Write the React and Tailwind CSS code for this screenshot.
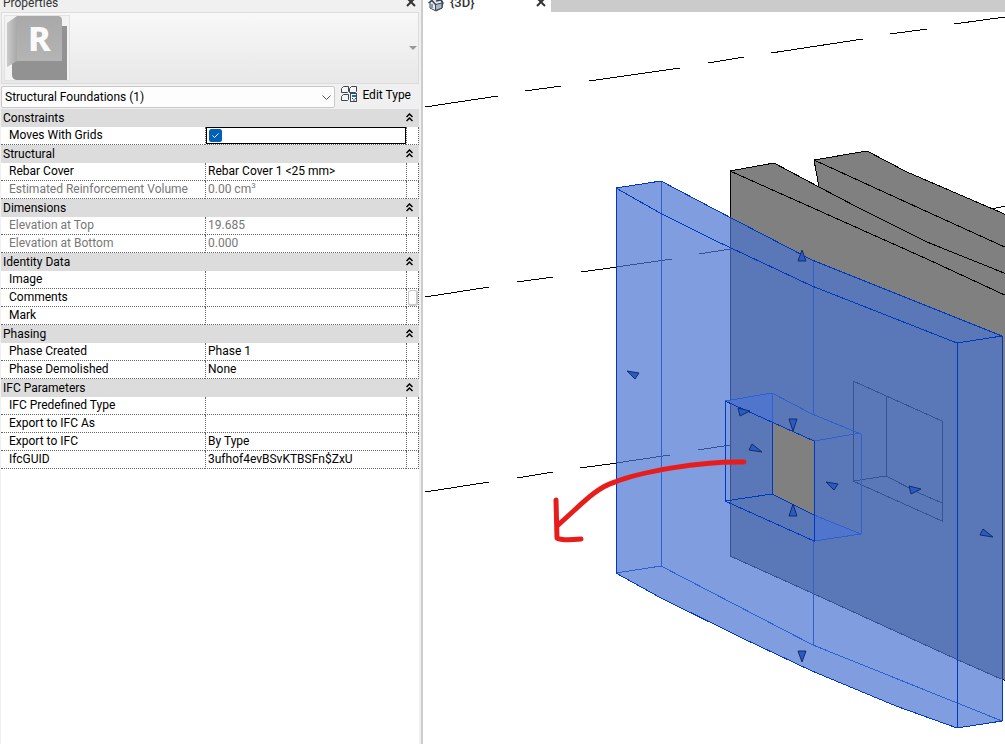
import React from "react";

const sections = [
  { title: "Constraints", rows: [{ name: "Moves With Grids", kind: "check" }] },
  {
    title: "Structural",
    rows: [
      { name: "Rebar Cover", value: "Rebar Cover 1 <25 mm>" },
      { name: "Estimated Reinforcement Volume", value: "0.00 cm", sup: "3", muted: true },
    ],
  },
  {
    title: "Dimensions",
    rows: [
      { name: "Elevation at Top", value: "19.685", muted: true },
      { name: "Elevation at Bottom", value: "0.000", muted: true },
    ],
  },
  {
    title: "Identity Data",
    rows: [
      { name: "Image", value: "" },
      { name: "Comments", value: "", more: true },
      { name: "Mark", value: "" },
    ],
  },
  {
    title: "Phasing",
    rows: [
      { name: "Phase Created", value: "Phase 1" },
      { name: "Phase Demolished", value: "None" },
    ],
  },
  {
    title: "IFC Parameters",
    rows: [
      { name: "IFC Predefined Type", value: "" },
      { name: "Export to IFC As", value: "" },
      { name: "Export to IFC", value: "By Type" },
      { name: "IfcGUID", value: "3ufhof4evBSvKTBSFn$ZxU" },
    ],
  },
];

function CloseIcon() {
  return (
    <svg width="10" height="10" viewBox="0 0 10 10" className="block">
      <path d="M1 1L9 9M9 1L1 9" stroke="#333" strokeWidth="2" fill="none" />
    </svg>
  );
}

function FamilyIcon() {
  return (
    <svg width="66" height="66" viewBox="0 0 66 66" className="block">
      <defs>
        <linearGradient id="fold" x1="0" x2="1">
          <stop offset="0" stopColor="#cacaca" />
          <stop offset="1" stopColor="#a9a9a9" />
        </linearGradient>
        <linearGradient id="face" x1="0" y1="0" x2="0" y2="1">
          <stop offset="0" stopColor="#a9a9a9" />
          <stop offset="1" stopColor="#b4b4b4" />
        </linearGradient>
      </defs>
      <rect x="0.5" y="0.5" width="65" height="65" fill="#f3f3f3" stroke="#e2e2e2" />
      <path d="M8 46L58 11H63V65H12Q8 64 8 60Z" fill="#929292" />
      <path d="M3 8L13 1V46L3 52Z" fill="url(#fold)" />
      <path d="M13 1H55Q58 2 58 5V46H13Z" fill="url(#face)" />
      <text x="24" y="36" fontSize="34" fontWeight="800" fill="#fafafa" fontFamily="'Noto Sans', 'Open Sans', sans-serif">R</text>
    </svg>
  );
}

function EditTypeIcon() {
  return (
    <svg width="17" height="17" viewBox="0 0 17 17" className="block shrink-0">
      <g fill="#f6f6f6" stroke="#3c4655">
        <path d="M2.500 0.500L0.500 2.500V6.500H6.500L7.500 5.500V0.500Z" />
        <path d="M10.500 0.500L8.500 2.500V6.500H14.500L15.500 5.500V0.500Z" />
        <path d="M2.500 8.500L0.500 10.500V14.500H6.500L7.500 13.500V8.500Z" />
        <rect x="9.500" y="7.500" width="6" height="8" />
      </g>
      <rect x="11" y="9" width="4" height="2" fill="#1668c4" />
      <path d="M11 12.500H12M14 12.500H15M12 14H14" stroke="#3c4655" />
    </svg>
  );
}

function HouseIcon() {
  return (
    <svg width="16" height="16" viewBox="0 0 16 16" className="block shrink-0">
      <path d="M2 6L5 2L11 1L15 6L14 12L8 15L2 12Z" fill="#e4e9ee" stroke="#3c4655" />
      <path d="M7.500 8.500L14 7V12L7.500 14.500Z" fill="#a9b7c6" stroke="#3c4655" />
      <path d="M0.500 7L4 4.500L8 9M8 5L13 4L15 8" fill="none" stroke="#3c4655" strokeWidth="1.500" />
      <path d="M4 8V12" stroke="#3c4655" />
    </svg>
  );
}

function Collapse({ title }) {
  return (
    <button type="button" aria-label={"Collapse " + title} className="block h-[17px] self-start px-1">
      <svg width="7" height="9" viewBox="0 0 7 9" className="block">
        <path d="M0.500 4L3.500 1L6.500 4M0.500 8L3.500 5L6.500 8" fill="none" stroke="#000" strokeWidth="1.500" />
      </svg>
    </button>
  );
}

function Row({ row }) {
  const tone = row.muted ? "text-[#777]" : "text-black";
  return (
    <tr className={"h-[18px] " + tone}>
      <th scope="row" className="border-b border-dotted border-[#666] p-0 pl-2 text-left font-normal">
        <span className="block h-[17px]">{row.name}</span>
      </th>
      <td className="border-b border-l border-dotted border-[#666] p-0">
        {row.kind === "check" ? (
          <label className="flex h-[17px] items-center border border-black pl-0.5">
            <input type="checkbox" defaultChecked aria-label={row.name} className="peer sr-only" />
            <svg width="13" height="13" viewBox="0 0 13 13" className="block">
              <rect width="13" height="13" rx="2.500" fill="#005fb8" />
              <path d="M3.500 6.500L5.500 8.500L9.500 4.500" fill="none" stroke="#fff" />
            </svg>
          </label>
        ) : (
          <span className="block h-[17px] pl-0.5">
            {row.value}
            {row.sup && <sup className="top-[-5px] text-[8px]">{row.sup}</sup>}
          </span>
        )}
      </td>
      <td className="border-x border-b border-dotted border-[#666] p-0">
        {row.more && (
          <button type="button" aria-label="Edit comments" className="ml-px block h-4 w-[10px] rounded-[3px] border border-r-2 border-b-2 border-[#c9c9c9] bg-white" />
        )}
      </td>
    </tr>
  );
}

function Properties() {
  return (
    <aside className="flex w-[424px] shrink-0 flex-col border-r border-white bg-[#f0f0f0]">
      <div className="flex grow flex-col border-r-2 border-[#cdcdcd] pr-0.5 pl-px">
        <header className="flex h-3 items-end justify-between overflow-hidden pr-[3px] pl-0.5">
          <h1 className="text-[12px] leading-[18px] text-[#333]">Properties</h1>
          <button type="button" aria-label="Close properties" className="mb-[5px]"><CloseIcon /></button>
        </header>
        <div className="flex h-[72px] items-center justify-between border border-[#dcdcdc] bg-linear-to-b from-[#f8f8f8] to-[#e8e8e8] pr-px pl-0.5">
          <FamilyIcon />
          <button type="button" aria-label="Change type">
            <svg width="8" height="4" viewBox="0 0 8 4" className="block"><path d="M0 0H8L4 4Z" fill="#999" /></svg>
          </button>
        </div>
        <div className="flex h-[25px] items-center gap-[6px]">
          <div className="relative grow">
            <select aria-label="Category" className="block h-[22px] w-full appearance-none rounded-xs border border-[#c9c9c9] bg-[#fdfdfd] pl-[3px] text-[12px]">
              <option>Structural Foundations (1)</option>
            </select>
            <svg width="9" height="5" viewBox="0 0 9 5" className="pointer-events-none absolute top-[9px] right-1">
              <path d="M0.500 0.500L4.500 4.500L8.500 0.500" fill="none" stroke="#555" />
            </svg>
          </div>
          <button type="button" className="flex items-center gap-1 pr-2 pb-1 text-[12px] leading-4">
            <EditTypeIcon />
            Edit Type
          </button>
        </div>
        <div className="grow bg-white">
          <table className="w-full table-fixed border-separate border-spacing-0 text-[12px] leading-[16px]">
            <colgroup>
              <col />
              <col className="w-[201px]" />
              <col className="w-[13px]" />
            </colgroup>
            {sections.map((s) => (
              <tbody key={s.title}>
                <tr className="h-[18px] bg-[#dcdcdc]">
                  <th colSpan={3} scope="rowgroup" className="p-0 pl-0.5 text-left font-normal">
                    <div className="flex h-[18px] items-center justify-between pr-0.5">
                      {s.title}
                      <Collapse title={s.title} />
                    </div>
                  </th>
                </tr>
                {s.rows.map((r) => <Row key={r.name} row={r} />)}
              </tbody>
            ))}
          </table>
        </div>
      </div>
    </aside>
  );
}

const gridDashes =
  "M425 107L498 96M525 91L561 86M589 81L680 68M708 63L744 57M771 53L863 39M890 34L927 29M954 24L1005 17" +
  "M425 297L489 287M517 282L553 277M581 272L617 267M425 492L489 482M517 478L553 472M580 468L617 463M992 209L1005 206";

const handles = [
  "M802 250L806 261H798Z",
  "M802 662L798 651H806Z",
  "M627 371L639 373L635 379Z",
  "M738 408L750 411L740 416Z",
  "M752 444L762 452L749 450Z",
  "M789 419H797L793 431Z",
  "M793 504L797 516H789Z",
  "M826 482L838 484L834 490Z",
  "M909 486L921 489L911 494Z",
  "M983 529L993 537L980 535Z",
];

function Model() {
  return (
    <svg viewBox="424 12 581 732" preserveAspectRatio="xMinYMin slice" role="img" aria-label="3D view" className="block min-h-0 w-full grow">
      <path d={gridDashes} fill="none" stroke="#000" shapeRendering="crispEdges" />
      <g shapeRendering="crispEdges" strokeWidth="1" transform="translate(-1 0)">
        <path d="M815 160L868 151L908 172L1010 216V300L820 187Z" fill="#808080" />
        <path d="M820 187L815 160L868 151L908 172L1010 216M815 160L898 198L1010 249" fill="none" stroke="#000" />
        <path d="M731 171L775 163L820 187L858 207L928 242L1010 275V682L957 659L813 593L731 556Z" fill="#808080" />
        <path d="M731 260V171L775 163L820 187L858 207L928 242L1010 275M731 171L805 204L928 259L1010 297M1002 679L1010 682" fill="none" stroke="#000" />
        <path d="M617 188L661 181L715 209L813 260L1003 336V721L958 728L897 706L813 671L743 638L660 597L617 573Z" fill="#809ddf" />
        <path d="M731 218L813 260L1003 336V679L957 659L813 593L731 556Z" fill="#5a78b8" />
        <path d="M617 267L673 259M700 254L731 249M617 463L671 455M699 450L731 445M731 249V556L813 593L957 659L1002 679M731 218V249M854 381L943 421V521L854 481ZM887 396V476L854 481M887 476L920 493L943 503" fill="none" stroke="#365295" />
        <path d="M726 401L773 393V422ZM815 515L861 534L815 541Z" fill="#5075cd" />
        <path d="M773 422L815 441V515L773 494Z" fill="#808080" />
        <path d="M662 181V566L617 573M662 566L783 629L814 645L1003 721M814 260V414M814 541V645M726 401L773 393L813 414L862 434V534L815 541M773 393V422M815 441L862 433M815 515L862 534" fill="none" stroke="#3060cf" />
        <path d="M617 188L662 181L715 209L813 260L1003 336V721L958 728L897 706L813 671L743 638L660 597L617 573ZL661 213L715 240L813 286L958 343V728M958 343L1003 336" fill="none" stroke="#0039bd" />
        <path d="M726 401L815 441V541L726 501ZM726 501L773 494L815 515M773 422V494" fill="none" stroke="#0039bd" />
      </g>
      {handles.map((d) => <path key={d} d={d} fill="#285bc5" stroke="#142c66" />)}
      <path d="M744 462C700 461 640 472 615 482C595 488 580 506 558 525M556 500L557 538Q562 541 581 539" fill="none" stroke="#e91c1c" strokeWidth="5" strokeLinecap="round" strokeLinejoin="round" />
    </svg>
  );
}

export default function App() {
  return (
    <div className="flex h-screen overflow-hidden bg-white font-['Roboto','Open_Sans',sans-serif] text-black">
      <Properties />
      <main className="flex min-w-0 grow flex-col">
        <nav className="flex h-3 shrink-0 bg-[#cbcbcb]">
          <div className="flex h-3 w-[127px] items-end overflow-hidden bg-white pr-[5px] pl-1">
            <HouseIcon />
            <a href="#view-3d" className="ml-[6px] text-[13px] leading-[18px] font-medium text-[#333]">{"{3D}"}</a>
            <button type="button" aria-label="Close view" className="mb-[5px] ml-auto"><CloseIcon /></button>
          </div>
        </nav>
        <Model />
      </main>
    </div>
  );
}
